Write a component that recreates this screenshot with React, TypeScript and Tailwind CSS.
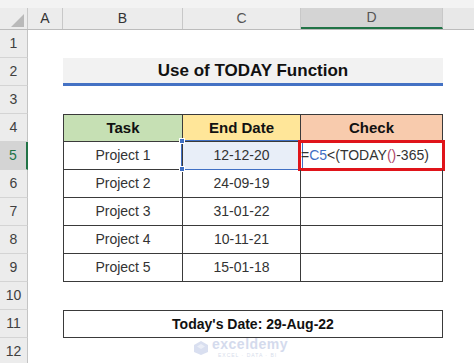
import React from 'react';

const font = { fontFamily: '"Liberation Sans", Arial, sans-serif' };

function RowHeader({ n, active }: { n: number; active?: boolean }) {
  return (
    <div
      className={`w-[28px] shrink-0 flex items-center justify-center border-b border-[#d4d4d4] text-[14px] ${
        active
          ? 'bg-[#d4d4d4] text-[#217346] border-r-2 border-r-[#217346]'
          : 'bg-[#ececec] text-[#404040] border-r border-r-[#c4c4c4]'
      }`}
    >
      {n}
    </div>
  );
}

function Row({ n, active, children }: { n: number; active?: boolean; children?: React.ReactNode }) {
  return (
    <div className="flex h-[28px]">
      <RowHeader n={n} active={active} />
      <div className="w-[35px] shrink-0" />
      {children}
    </div>
  );
}

const line = 'border-[#3a3a3a]';

function TableRow({
  n,
  task,
  date,
  active,
}: {
  n: number;
  task: string;
  date: string;
  active?: boolean;
}) {
  return (
    <Row n={n} active={active}>
      <div className={`w-[120px] shrink-0 flex items-center justify-center border-l border-r border-b ${line} text-[14px] text-[#333]`}>
        {task}
      </div>
      <div
        className={`relative w-[118px] shrink-0 flex items-center justify-center border-r border-b ${line} text-[14px] text-[#333] ${
          active ? 'bg-[#e8eef8]' : ''
        }`}
      >
        {date}
        {active && (
          <>
            <div className="absolute -top-[2px] -left-[2px] -right-[3px] -bottom-[1px] border-[1.5px] border-[#3f6fc4]" />
            <div className="absolute -top-[4px] -left-[4px] w-[6px] h-[6px] bg-[#3f6fc4] border border-white" />
            <div className="absolute -bottom-[3px] -left-[4px] w-[6px] h-[6px] bg-[#3f6fc4] border border-white" />
          </>
        )}
      </div>
      <div className={`relative w-[142px] shrink-0 flex items-center border-r border-b ${line} text-[14px] text-[#333]`}>
        {active && (
          <>
            <span className="whitespace-nowrap">
              =<span className="text-[#3f6fc4]">C5</span>&lt;(TODAY<span className="text-[#b0486a]">()</span>-365)
            </span>
            <div className="absolute -top-[2px] -left-[3px] -right-[3px] -bottom-[2px] border-[3px] border-[#e0141a]" />
          </>
        )}
      </div>
    </Row>
  );
}

export default function App() {
  const cols = [
    { l: 'A', w: 'w-[35px]', c: 'text-[#333]' },
    { l: 'B', w: 'w-[120px]', c: 'text-[#333]' },
    { l: 'C', w: 'w-[118px]', c: 'text-[#555]' },
  ];
  return (
    <div className="relative w-[474px] h-[363px] overflow-hidden bg-white" style={font}>
      <div className="h-[8px] bg-[#f3f3f3]" />
      {/* column headers */}
      <div className="flex h-[22px] bg-[#ececec] border-b border-[#bcbcbc]">
        <div className="relative w-[28px] shrink-0 border-r border-[#c8c8c8]">
          <svg className="absolute left-[11px] top-[6px]" width="13" height="13" viewBox="0 0 13 13">
            <polygon points="13,0 13,13 0,13" fill="#b9b9b9" />
          </svg>
        </div>
        {cols.map((c) => (
          <div
            key={c.l}
            className={`${c.w} shrink-0 flex items-center justify-center border-r border-[#c8c8c8] text-[14px] ${c.c}`}
          >
            {c.l}
          </div>
        ))}
        <div className="w-[142px] shrink-0 flex items-center justify-center bg-[#d4d4d4] border-r border-[#c8c8c8] border-b-2 border-b-[#217346] text-[14px] text-[#555]">
          D
        </div>
        <div className="flex-1 bg-[#e8e8e8]" />
      </div>

      <Row n={1} />
      <Row n={2}>
        <div className="w-[380px] shrink-0 flex items-center justify-center bg-[#f2f2f2] border-b-[3px] border-[#4472c4] text-[17px] font-bold text-[#111]">
          Use of TODAY Function
        </div>
      </Row>
      <Row n={3} />
      <Row n={4}>
        <div className={`w-[120px] shrink-0 flex items-center justify-center bg-[#c6e0b4] border ${line} text-[15px] font-bold text-[#111]`}>
          Task
        </div>
        <div className={`w-[118px] shrink-0 flex items-center justify-center bg-[#ffe699] border-t border-r border-b ${line} text-[15px] font-bold text-[#111]`}>
          End Date
        </div>
        <div className={`w-[142px] shrink-0 flex items-center justify-center bg-[#f8cbad] border-t border-r border-b ${line} text-[15px] font-bold text-[#111]`}>
          Check
        </div>
      </Row>
      <TableRow n={5} task="Project 1" date="12-12-20" active />
      <TableRow n={6} task="Project 2" date="24-09-19" />
      <TableRow n={7} task="Project 3" date="31-01-22" />
      <TableRow n={8} task="Project 4" date="10-11-21" />
      <TableRow n={9} task="Project 5" date="15-01-18" />
      <Row n={10} />
      <Row n={11}>
        <div className={`w-[380px] shrink-0 flex items-center justify-center border ${line} text-[14px] font-bold text-[#111]`}>
          Today's Date: 29-Aug-22
        </div>
      </Row>
      <Row n={12} />

      {/* watermark */}
      <div className="absolute left-[193px] top-[337px] flex items-center gap-[3px] opacity-70">
        <svg width="16" height="16" viewBox="0 0 16 16">
          <polygon points="8,1 15,5 15,12 8,15 1,12 1,5" fill="#c9d2ea" />
          <polygon points="8,4 12,6.5 8,9 4,6.5" fill="#e3e8f5" />
        </svg>
        <div className="flex flex-col gap-[2px]">
          <span className="text-[14px] leading-[14px] font-bold text-[#c3cce6] tracking-[0.5px]">exceldemy</span>
          <span className="text-[5px] leading-[5px] text-[#c8cfe4] tracking-[1px] pl-[6px]">EXCEL · DATA · BI</span>
        </div>
      </div>
    </div>
  );
}
